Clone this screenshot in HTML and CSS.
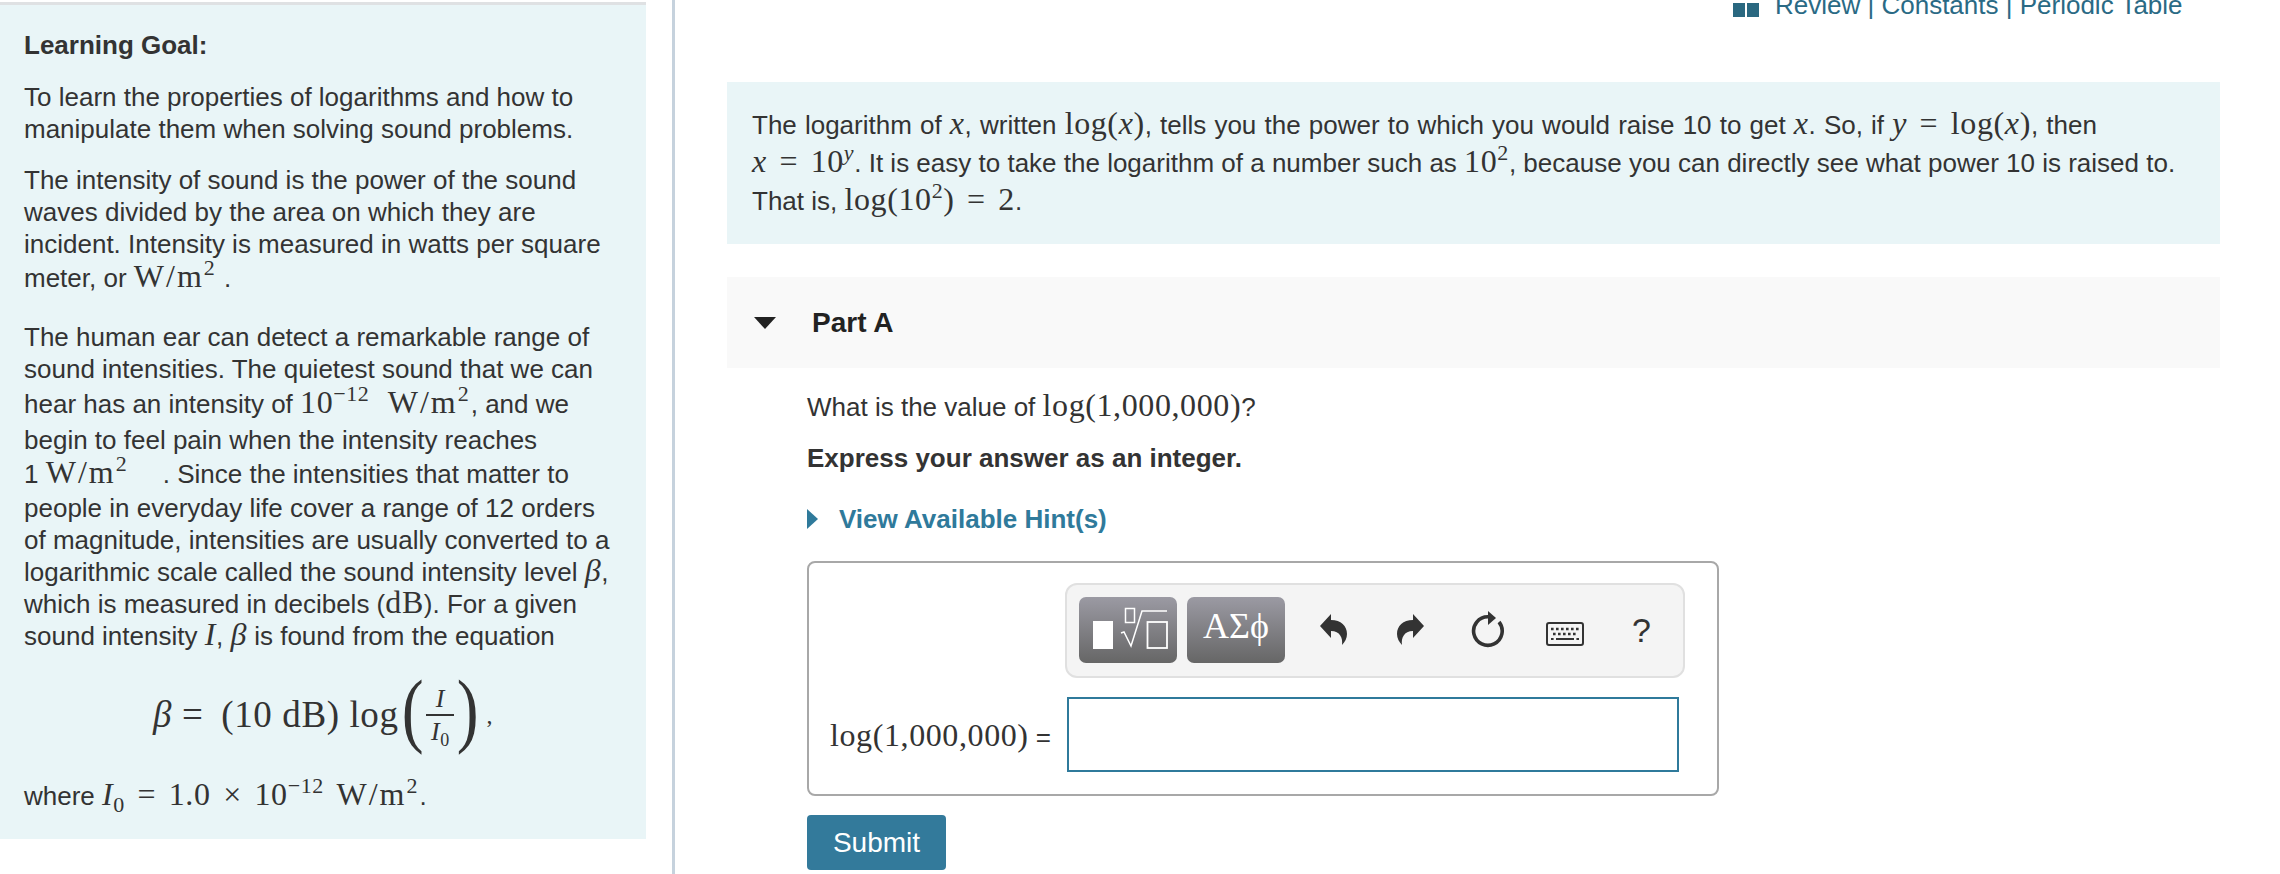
FILE: index.html
```html
<!DOCTYPE html>
<html lang="en">

<head>
    <meta charset="UTF-8">
    <meta name="viewport" content="width=device-width, initial-scale=1.0">
    <title>Logarithms and sound</title>
    <link rel="stylesheet" href="styles.css">
</head>

<body>
    <div class="page">
        <aside class="goal">
            <h2 class="goal-title">Learning Goal:</h2>
            <p>To learn the properties of logarithms and how to<br>manipulate them when solving sound problems.</p>
            <p>The intensity of sound is the power of the sound<br>waves divided by the area on which they are<br>incident. Intensity is measured in watts per square<br><span class="tall">meter, or <span class="m unit">W/m<sup>2</sup></span> .</span></p>
            <p class="after-tall">The human ear can detect a remarkable range of<br>sound intensities. The quietest sound that we can<br><span class="taller">hear has an intensity of <span class="m gap">10<sup>−12</sup></span> <span class="m unit">W/m<sup>2</sup></span>, and we</span><br>begin to feel pain when the intensity reaches<br><span class="tall">1 <span class="m unit">W/m<sup>2</sup></span> &nbsp;&nbsp;&nbsp;&thinsp;. Since the intensities that matter to</span><br>people in everyday life cover a range of 12 orders<br>of magnitude, intensities are usually converted to a<br>logarithmic scale called the sound intensity level <span class="m"><i>β</i></span>,<br>which is measured in decibels (<span class="m">dB</span>). For a given<br>sound intensity <span class="m"><i>I</i></span>, <span class="m"><i>β</i></span> is found from the equation</p>
            <div class="equation m">
                <i>β</i> <span class="eq-sign">=</span> (10 dB) log<span class="paren">(</span><span class="frac"><i class="num">I</i><span class="den"><i>I</i><sub>0</sub></span></span><span class="paren">)</span><span class="comma">,</span>
            </div>
            <p class="where">where <span class="m wide"><i>I</i><sub>0</sub> = 1.0 × 10<sup>−12</sup> <span class="unit">W/m<sup>2</sup></span></span>.</p>
        </aside>

        <main class="content">
            <nav class="links">
                <svg class="book" width="26" height="14" viewBox="0 0 26 14"><path d="M0 0h12v14H0zM14 0h12v14H14z" fill="#2a6880"/></svg>
                <span>Review | Constants | Periodic Table</span>
            </nav>

            <section class="intro">
                <div class="first-line">The logarithm of <span class="m"><i>x</i></span>, written <span class="m">log(<i>x</i>)</span>, tells you the power to which you would raise 10 to get <span class="m"><i>x</i></span>. So, if <span class="m"><i>y</i> = log(<i>x</i>)</span>, then</div>
                <div><span class="m"><i>x</i> = 10<sup><i>y</i></sup></span>. It is easy to take the logarithm of a number such as <span class="m">10<sup>2</sup></span>, because you can directly see what power 10 is raised to.</div>
                <div>That is, <span class="m">log(10<sup>2</sup>) = 2</span>.</div>
            </section>

            <header class="part">
                <span class="arrow-down"></span>
                <span>Part A</span>
            </header>

            <section class="question">
                <p class="ask">What is the value of <span class="m">log(1,000,000)</span>?</p>
                <p class="express">Express your answer as an integer.</p>
                <div class="hint"><span class="arrow-right"></span><span>View Available Hint(s)</span></div>

                <div class="answer">
                    <div class="toolbar">
                        <button class="tool-btn" type="button">
                            <svg width="98" height="66" viewBox="0 0 98 66" fill="none" stroke="#fff">
                                <rect x="14" y="24" width="20" height="28" fill="#fff" stroke="none"/>
                                <rect x="46.5" y="11.5" width="9" height="14" stroke-width="1.5"/>
                                <path d="M42 36l3-1 7 14 11-35h25" stroke-width="1.5"/>
                                <rect x="68.5" y="25" width="19.5" height="26" stroke-width="1.8"/>
                            </svg>
                        </button>
                        <button class="tool-btn greek" type="button">ΑΣϕ</button>
                        <span class="tool-slot">
                            <svg width="27" height="31" viewBox="0 0 27 31"><path d="M0 12L11 0V6C21 6 27 12 27 20 27 24 25 28 22 31 23 24 20 17 11 17V24Z" fill="#333"/></svg>
                        </span>
                        <span class="tool-slot">
                            <svg width="27" height="31" viewBox="0 0 27 31"><path d="M27 12L16 0V6C6 6 0 12 0 20 0 24 2 28 5 31 4 24 7 17 16 17V24Z" fill="#333"/></svg>
                        </span>
                        <span class="tool-slot">
                            <svg width="34" height="38" viewBox="0 0 34 38" fill="none"><path d="M17 5.7A14.3 14.3 0 1 0 28 11" stroke="#333" stroke-width="3.6"/><path d="M17 0l8 7-8 7z" fill="#333"/></svg>
                        </span>
                        <span class="tool-slot keyboard">
                            <svg width="38" height="24" viewBox="0 0 38 24" fill="none"><rect x="1" y="1" width="36" height="22" rx="2" stroke="#333" stroke-width="2"/><path d="M5 7h28M7 12h24" stroke="#333" stroke-width="2.4" stroke-dasharray="2.6 2.4"/><path d="M5 17h2.6M30.4 17h2.6M10 17h18" stroke="#333" stroke-width="2.2"/></svg>
                        </span>
                        <span class="tool-slot tool-help">?</span>
                    </div>
                    <div class="answer-row">
                        <label class="answer-label" for="answer"><span class="m">log(1,000,000)</span> =</label>
                        <input class="answer-input" type="text" id="answer">
                    </div>
                </div>

                <button class="submit" type="button">Submit</button>
            </section>
        </main>
    </div>
</body>

</html>
```

FILE: styles.css
```css
html, body {
    margin: 0;
    height: 100%;
    overflow: hidden;
    background: #fff;
}

body {
    font-family: "Liberation Sans", Arial, sans-serif;
    font-size: 26px;
    line-height: 32px;
    color: #333;
}

.page {
    display: flex;
    height: 874px;
    padding-top: 2px;
    box-sizing: border-box;
}

/* left column */
.goal {
    width: 646px;
    height: 837px;
    box-sizing: border-box;
    flex: none;
    padding: 24px 24px 0;
    background: #e9f5f7;
    border-top: 3px solid #dfe1e3;
}

.goal-title {
    margin: 0 0 20px;
    font-size: 26px;
    line-height: 32px;
}

.goal p {
    margin: 0 0 19px;
}

.tall {
    display: inline-block;
    line-height: 36px;
}

.taller {
    display: inline-block;
    line-height: 39px;
}

.after-tall {
    padding-top: 6px;
}

.m {
    font-family: "Liberation Serif", "Times New Roman", serif;
    font-size: 32px;
    letter-spacing: .6px;
    line-height: 0;
}

.m sup, .m sub {
    font-size: 22px;
    line-height: 0;
}

.unit {
    letter-spacing: 2px;
}

.gap {
    margin-right: 11px;
}

.wide {
    word-spacing: 4px;
}

.equation {
    display: flex;
    align-items: center;
    justify-content: center;
    height: 78px;
    margin: 24px 0 26px;
    font-size: 37px;
    line-height: 40px;
    white-space: pre;
}

.eq-sign {
    margin: 0 8px 0 10px;
}

.paren {
    font-size: 82px;
    font-weight: 100;
    line-height: 74px;
    transform: scaleX(.8);
    margin-top: -10px;
}

.frac {
    display: inline-flex;
    flex-direction: column;
    align-items: center;
    font-size: 26px;
    line-height: 31px;
}

.num {
    border-bottom: 2px solid #333;
    width: 28px;
    text-align: center;
}

.den sub {
    font-size: 18px;
}

.comma {
    font-size: 24px;
    margin-left: 4px;
}

.goal .where {
    margin: 0;
}

/* right column */
.content {
    flex: 1;
    min-width: 0;
    margin-top: -2px;
    margin-left: 26px;
    padding: 0 60px 0 52px;
    border-left: 3px solid #c6d2dd;
}

.links {
    display: flex;
    align-items: flex-end;
    height: 17px;
    margin-bottom: 65px;
    padding-left: 1006px;
    gap: 16px;
    line-height: 24px;
    color: #2a6a85;
    white-space: nowrap;
}

.book {
    flex: none;
}

.intro {
    height: 162px;
    box-sizing: border-box;
    padding: 24px 25px;
    background: #e9f5f7;
    line-height: 38px;
    white-space: nowrap;
    margin-bottom: 33px;
}

.intro .m {
    word-spacing: 4px;
}

.first-line {
    word-spacing: .9px;
}

.part {
    display: flex;
    align-items: center;
    gap: 36px;
    height: 91px;
    padding-left: 27px;
    background: #f9f9f9;
    font-size: 28px;
    font-weight: bold;
    color: #222;
}

.arrow-down {
    width: 0;
    height: 0;
    border-left: 11px solid transparent;
    border-right: 11px solid transparent;
    border-top: 12px solid #222;
}

.question {
    padding-left: 80px;
}

.question p {
    margin: 0;
}

.ask {
    padding-top: 21px;
    line-height: 36px;
}

.question .express {
    margin-top: 15px;
    font-weight: bold;
    line-height: 36px;
}

.hint {
    display: flex;
    align-items: center;
    gap: 21px;
    margin-top: 27px;
    font-weight: bold;
    color: #2f7a9b;
}

.arrow-right {
    width: 0;
    height: 0;
    border-top: 10px solid transparent;
    border-bottom: 10px solid transparent;
    border-left: 11px solid #2f7a9b;
}

.answer {
    width: 912px;
    height: 235px;
    box-sizing: border-box;
    margin-top: 26px;
    padding: 20px 32px 0 21px;
    border: 2px solid #a8a8a8;
    border-radius: 8px;
}

.toolbar {
    display: flex;
    align-items: center;
    height: 95px;
    box-sizing: border-box;
    margin-left: 235px;
    padding: 0 0 2px 12px;
    background: #f4f4f4;
    border: 2px solid #e0e0e0;
    border-radius: 12px;
}

.tool-btn {
    display: flex;
    align-items: center;
    justify-content: center;
    width: 98px;
    height: 66px;
    flex: none;
    margin-right: 10px;
    padding: 0;
    border: none;
    border-radius: 7px;
    background: linear-gradient(#9b9aa3, #666);
}

.greek {
    padding-bottom: 8px;
    font-family: "Liberation Serif", serif;
    font-size: 36px;
    color: #fff;
}

.tool-slot {
    display: flex;
    justify-content: center;
    width: 77px;
    flex: none;
}

.keyboard {
    margin-top: 8px;
}

.tool-help {
    font-size: 34px;
}

.answer-row {
    display: flex;
    align-items: center;
    margin-top: 19px;
}

.answer-label {
    width: 237px;
    flex: none;
    white-space: nowrap;
    padding-top: 4px;
}

.answer-input {
    flex: 1;
    min-width: 0;
    height: 75px;
    box-sizing: border-box;
    margin-right: 6px;
    border: 2px solid #2f7a9b;
    border-radius: 0;
    outline: none;
}

.submit {
    display: block;
    width: 139px;
    height: 55px;
    margin-top: 19px;
    border: none;
    border-radius: 4px;
    background: #337a9b;
    color: #fff;
    font-family: inherit;
    font-size: 28px;
}
```
